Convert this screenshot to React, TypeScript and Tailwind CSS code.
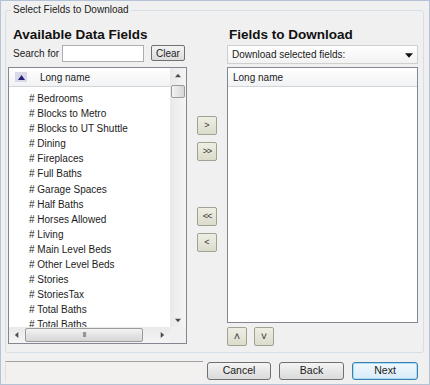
import React from "react"

const fields = [
  "# Bedrooms",
  "# Blocks to Metro",
  "# Blocks to UT Shuttle",
  "# Dining",
  "# Fireplaces",
  "# Full Baths",
  "# Garage Spaces",
  "# Half Baths",
  "# Horses Allowed",
  "# Living",
  "# Main Level Beds",
  "# Other Level Beds",
  "# Stories",
  "# StoriesTax",
  "# Total Baths",
  "# Total Baths",
]

function Tri({ dir, size = 7, color = "#4d4d4d" }: { dir: "up" | "down" | "left" | "right"; size?: number; color?: string }) {
  const pts = {
    up: "0,5 3.5,1 7,5",
    down: "0,2 3.5,6 7,2",
    left: "5,0 1,3.5 5,7",
    right: "2,0 6,3.5 2,7",
  }[dir]
  return (
    <svg width={size} height={size} viewBox="0 0 7 7">
      <polygon points={pts} fill={color} />
    </svg>
  )
}

function ArrowBtn({ label, className = "" }: { label: string; className?: string }) {
  return (
    <div
      className={
        "w-[20px] h-[19px] flex items-center justify-center border border-[#a2a294] rounded-[2px] bg-linear-to-b from-[#eeeee4] to-[#dcdccc] text-[9px] text-[#333] leading-none " +
        className
      }
    >
      {label}
    </div>
  )
}

function ListHeader({ sort }: { sort?: boolean }) {
  return (
    <div className="h-[19px] flex items-center border-b border-[#d5d5d5] bg-linear-to-b from-[#ffffff] to-[#f1f2f4] shrink-0">
      {sort ? (
        <>
          <div className="ml-[6px] w-[12px] h-[10px] bg-[#d9d9e8] flex items-center justify-center">
            <svg width="7" height="5" viewBox="0 0 7 5">
              <polygon points="0,5 3.5,0 7,5" fill="#23237a" />
            </svg>
          </div>
          <span className="ml-[13px]">Long name</span>
        </>
      ) : (
        <span className="ml-[5px]">Long name</span>
      )}
    </div>
  )
}

export default function App() {
  return (
    <div className="w-[430px] h-[385px] bg-[#f0f0f0] text-[10px] text-[#1b1b1b] overflow-hidden flex flex-col border border-[#b4c3d6]" style={{ fontFamily: '"Liberation Sans", Arial, sans-serif' }}>
      {/* group box */}
      <div className="relative ml-[4px] mt-[9px] w-[419px] h-[343px] border border-[#d5dfe5] rounded-[3px] flex">
        <span className="absolute -top-[7px] left-[5px] px-[2px] bg-[#f0f0f0] leading-[12px]">Select Fields to Download</span>

        {/* left column */}
        <div className="ml-[2px] w-[179px] flex flex-col">
          <div className="mt-[16px] pl-[5px] h-[16px] leading-[16px] text-[13.5px] font-bold text-[#111]">Available Data Fields</div>
          <div className="mt-[2px] h-[16px] flex items-center">
            <span className="ml-[5px] w-[49px]">Search for</span>
            <div className="w-[82px] h-[17px] bg-white border border-[#abadb3]" />
            <div className="ml-[7px] w-[34px] h-[16px] flex items-center justify-center border border-[#707070] rounded-[2px] bg-linear-to-b from-[#f4f4f4] to-[#dcdcdc]">Clear</div>
          </div>
          <div className="mt-[6px] h-[277px] bg-white border border-[#828790] flex flex-col">
            <div className="flex flex-1 min-h-0">
              <div className="flex-1 flex flex-col overflow-hidden">
                <ListHeader sort />
                <div className="pt-[4px] pl-[20px]">
                  {fields.map((f, i) => (
                    <div key={i} className="h-[15.1px] leading-[15px] whitespace-nowrap">
                      {f}
                    </div>
                  ))}
                </div>
              </div>
              <div className="w-[16px] bg-linear-to-r from-[#e9e9e9] to-[#f5f5f5] flex flex-col items-center">
                <div className="h-[15px] flex items-center justify-center">
                  <Tri dir="up" size={6} />
                </div>
                <div className="mt-[2px] w-[14px] h-[13px] border border-[#9b9b9b] rounded-[2px] bg-linear-to-r from-[#f3f3f3] to-[#d6d6d6]" />
                <div className="flex-1" />
                <div className="h-[15px] flex items-center justify-center">
                  <Tri dir="down" size={6} />
                </div>
              </div>
            </div>
            <div className="h-[16px] flex">
              <div className="flex-1 flex items-center bg-linear-to-b from-[#e9e9e9] to-[#f5f5f5]">
                <div className="w-[16px] flex justify-center">
                  <Tri dir="left" size={6} />
                </div>
                <div className="w-[118px] h-[14px] border border-[#9b9b9b] rounded-[2px] bg-linear-to-b from-[#f3f3f3] to-[#d6d6d6] flex items-center justify-center text-[7px] text-[#666] tracking-[-1px]">
                  III
                </div>
                <div className="flex-1" />
                <div className="w-[16px] flex justify-center">
                  <Tri dir="right" size={6} />
                </div>
              </div>
              <div className="w-[16px] bg-[#f0f0f0]" />
            </div>
          </div>
        </div>

        {/* middle buttons */}
        <div className="w-[40px] flex flex-col items-center pt-[105px]">
          <ArrowBtn label=">" />
          <ArrowBtn label=">>" className="mt-[7px] tracking-[-1px]" />
          <ArrowBtn label="<<" className="mt-[46px] tracking-[-1px]" />
          <ArrowBtn label="<" className="mt-[7px]" />
        </div>

        {/* right column */}
        <div className="w-[191px] flex flex-col">
          <div className="mt-[16px] pl-[2px] h-[16px] leading-[16px] text-[13.5px] font-bold text-[#111]">Fields to Download</div>
          <div className="mt-[2px] h-[19px] flex items-center border border-[#cfcfcf] bg-linear-to-b from-[#ffffff] to-[#f2f2f2]">
            <span className="ml-[4px] flex-1">Download selected fields:</span>
            <div className="mr-[4px]">
              <Tri dir="down" size={8} color="#111" />
            </div>
          </div>
          <div className="mt-[3px] h-[256px] bg-white border border-[#828790] flex flex-col">
            <ListHeader />
          </div>
          <div className="mt-[4px] flex gap-[7px]">
            <ArrowBtn label="˄" className="w-[18px] h-[17px] text-[11px]" />
            <ArrowBtn label="˅" className="w-[18px] h-[17px] text-[11px]" />
          </div>
        </div>
      </div>

      {/* bottom bar */}
      <div className="mt-[8px] flex items-start">
        <div className="ml-[4px] w-[198px] h-[21px] border-t border-l border-[#a0a0a0] border-l-[#e0e0e0] bg-[#f3f1ef]" />
        <div className="ml-[4px] mt-[1px] w-[64px] h-[18px] flex items-center justify-center border border-[#707070] rounded-[3px] bg-linear-to-b from-[#f4f4f4] to-[#dadada] text-[10.5px]">Cancel</div>
        <div className="ml-[8px] mt-[1px] w-[65px] h-[18px] flex items-center justify-center border border-[#707070] rounded-[3px] bg-linear-to-b from-[#f4f4f4] to-[#dadada] text-[10.5px]">Back</div>
        <div className="ml-[8px] mt-[1px] w-[66px] h-[18px] flex items-center justify-center border border-[#3c7fb1] rounded-[3px] bg-linear-to-b from-[#f0f8fd] to-[#d8ecf8] shadow-[inset_0_0_0_1px_#a9dcf5] text-[10.5px]">Next</div>
      </div>
    </div>
  )
}
